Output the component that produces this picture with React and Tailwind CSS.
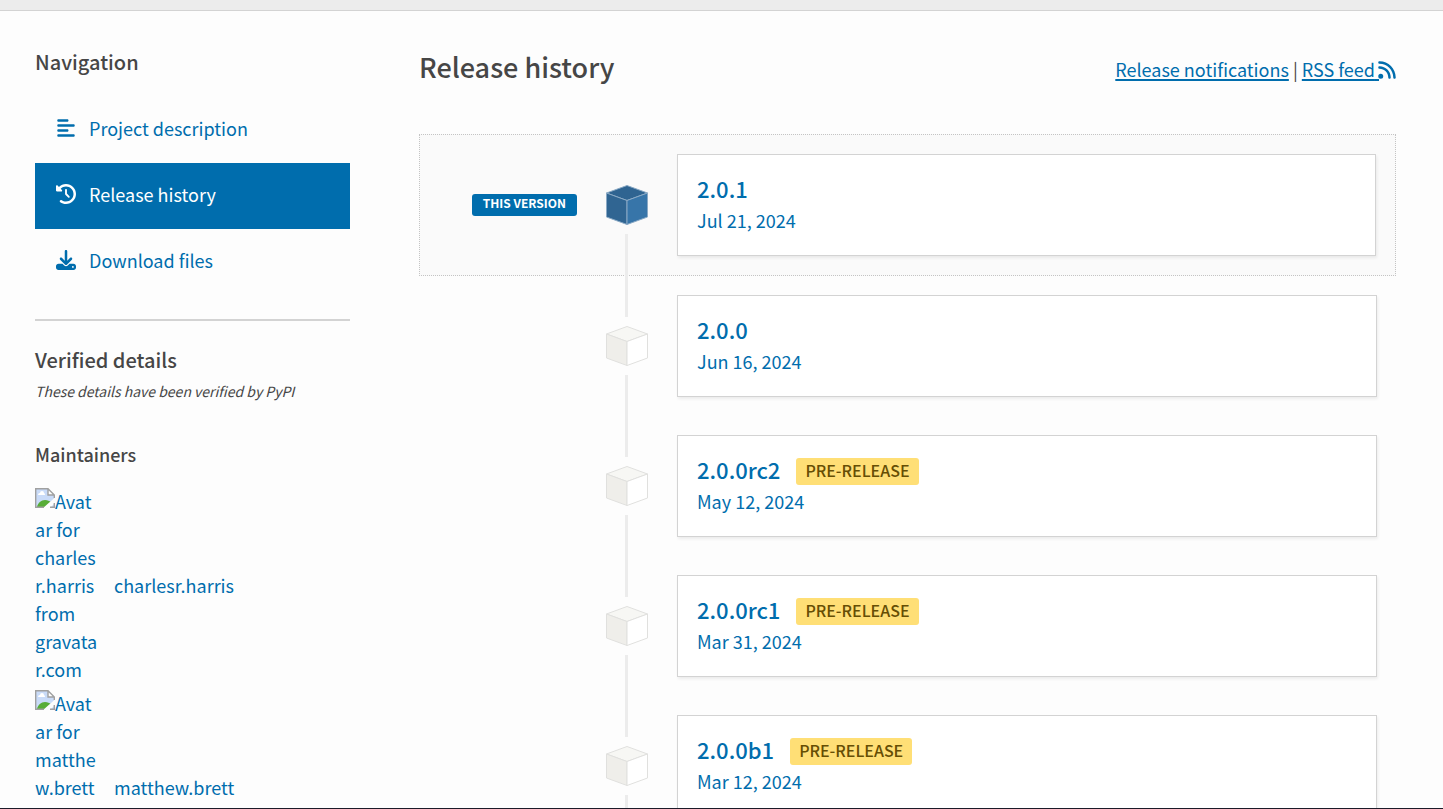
import { FaAlignLeft, FaClockRotateLeft, FaDownload, FaRss } from 'react-icons/fa6';

const navItems = [
  { label: 'Project description', icon: FaAlignLeft },
  { label: 'Release history', icon: FaClockRotateLeft, active: true },
  { label: 'Download files', icon: FaDownload },
];

const maintainers = [
  {
    name: 'charlesr.harris',
    alt: ['Avat', 'ar for', 'charles', 'r.harris', 'from', 'gravata', 'r.com'],
  },
  {
    name: 'matthew.brett',
    alt: ['Avat', 'ar for', 'matthe', 'w.brett', 'from', 'gravata', 'r.com'],
  },
];

const releases = [
  { version: '2.0.1', date: 'Jul 21, 2024', current: true },
  { version: '2.0.0', date: 'Jun 16, 2024' },
  { version: '2.0.0rc2', date: 'May 12, 2024', pre: true },
  { version: '2.0.0rc1', date: 'Mar 31, 2024', pre: true },
  { version: '2.0.0b1', date: 'Mar 12, 2024', pre: true },
];

function BrokenImage() {
  return (
    <svg viewBox="0 0 20 20" className="mt-px h-5 w-5 shrink-0 self-start" aria-hidden="true">
      <path d="M.5.5h12.5L19.5 7v12.5H.5z" fill="#c9dbf8" />
      <path d="M3 7a2 2 0 0 1 2-2 2 2 0 0 1 4 0 2 2 0 0 1 1 2z" fill="#fff" />
      <path d="M2 19c1-4 4-7 8-7 3 0 4 1 6 2v5z" fill="#58ad38" />
      <path d="M8 20 20 9.5V15l-5 5z" fill="#fdfdfd" />
      <path d="M13 .5V7h6.5z" fill="#fff" />
      <path d="M9 19.3H.7V.7H13L19.3 7v3M13 .7V7h6.3M15 19.3h4.3V15" fill="none" stroke="#a0a0a0" strokeWidth="1.4" />
    </svg>
  );
}

function Cube({ blue }) {
  const top = blue ? '#2f6491' : '#f7f7f4';
  const left = blue ? '#306592' : '#efeeea';
  const right = blue ? '#3775a9' : '#ffffff';
  const edge = blue ? '#8aa9c5' : '#e0e0de';
  return (
    <svg viewBox="0 0 42 40" className="h-10 w-[42px]" aria-hidden="true">
      <g stroke={edge} strokeWidth="1" strokeLinejoin="round">
        <path d="M21 .5 41.5 8 21 15.5.5 8z" fill={top} />
        <path d="M.5 8 21 15.5v24L.5 32z" fill={left} />
        <path d="M41.5 8 21 15.5v24L41.5 32z" fill={right} />
      </g>
    </svg>
  );
}

function Sidebar() {
  return (
    <aside className="w-[315px] shrink-0">
      <h2 className="pt-[37px] text-[20px] leading-7 font-medium">Navigation</h2>
      <nav className="mt-[21px] mb-6">
        {navItems.map(({ label, icon: Icon, active }) => (
          <a
            key={label}
            href="#"
            className={
              active
                ? 'flex h-[66px] items-center gap-3 bg-[#006dad] pb-1 pl-5 text-white'
                : 'flex h-[66px] items-center gap-3 pb-1 pl-5 text-[#006dad]'
            }
          >
            <span className="flex w-[22px] justify-center">
              <Icon size={20} />
            </span>
            {label}
          </a>
        ))}
      </nav>
      <div className="border-t-2 border-[#d3d3d3] pt-[25px]">
        <h2 className="text-[20px] leading-7 font-medium">Verified details</h2>
        <p className="mt-[5px] text-[14px] leading-6 italic">These details have been verified by PyPI</p>
        <h3 className="mt-[39px] text-[18px] leading-6 font-medium">Maintainers</h3>
        <ul className="mt-[21px] space-y-1.5">
          {maintainers.map((person) => (
            <li key={person.name}>
              <a href="#" className="flex items-center gap-4 text-[#006dad]">
                <span className="w-[63px] whitespace-nowrap">
                  {person.alt.map((line, i) => (
                    <span key={line} className="flex h-7 items-center">
                      {i === 0 && <BrokenImage />}
                      {line}
                    </span>
                  ))}
                </span>
                {person.name}
              </a>
            </li>
          ))}
        </ul>
      </div>
    </aside>
  );
}

function Release({ release, first }) {
  return (
    <li
      className={
        release.current
          ? 'flex border border-dotted border-[#c4c4c4] bg-[#fafafa] pr-[19px]'
          : 'flex border-l border-transparent pr-[19px]'
      }
    >
      <div className="flex w-[157px] shrink-0 items-center justify-end">
        {release.current && (
          <span className="rounded-[3px] bg-[#006dad] px-[11px] pb-1 text-[12px] leading-[18px] font-bold text-white">
            THIS VERSION
          </span>
        )}
      </div>
      <div
        className={
          release.current
            ? '-my-px flex w-[100px] shrink-0 flex-col items-center'
            : 'flex w-[100px] shrink-0 flex-col items-center'
        }
      >
        <div className={first ? 'flex-1' : 'mr-px w-[3px] flex-1 bg-[#ececec]'} />
        <div className="flex h-[58px] items-center">
          <Cube blue={release.current} />
        </div>
        <div className="mr-px w-[3px] flex-1 bg-[#ececec]" />
      </div>
      <a
        href="#"
        className="my-[19px] flex h-[102px] flex-1 flex-col justify-center border border-[#d3d3d3] bg-white px-[19px] pb-1.5 text-[#006dad] shadow-[1px_2px_3px_rgba(0,0,0,0.07)]"
      >
        <span className="flex items-center gap-4">
          <span className="text-[22px] leading-9 font-medium">{release.version}</span>
          {release.pre && (
            <span className="mb-0.5 self-end rounded-[3px] bg-[#ffdf76] px-[9px] pb-0.5 text-[16px] leading-[25px] font-medium text-[#664e04]">
              PRE-RELEASE
            </span>
          )}
        </span>
        <time className="leading-7">{release.date}</time>
      </a>
    </li>
  );
}

export default function App() {
  return (
    <div className="flex h-screen flex-col overflow-hidden border-b border-[#1c1b29] bg-[#fdfdfd] font-['Noto_Sans_CJK_JP','Noto_Sans',sans-serif] text-[18px] leading-7 text-[#464646]">
      <div className="h-[11px] shrink-0 border-b border-[#d3d3d3] bg-[#ececec]" />
      <div className="flex min-h-0 flex-1 gap-[69px] pr-[47px] pl-[35px]">
        <Sidebar />
        <main className="min-w-0 flex-1">
          <header className="flex items-center justify-between pt-9">
            <h1 className="text-[27px] leading-10 font-medium">Release history</h1>
            <p className="pt-1">
              <a href="#" className="text-[#006dad] underline decoration-2 underline-offset-2">
                Release notifications
              </a>{' '}
              |{' '}
              <a href="#" className="text-[#006dad] underline decoration-2 underline-offset-2">
                RSS feed{' '}
                <FaRss size={20} viewBox="0 0 448 512" className="-ml-px inline-block w-[18px] align-[-3px]" />
              </a>
            </p>
          </header>
          <ol className="mt-[47px]">
            {releases.map((release, i) => (
              <Release key={release.version} release={release} first={i === 0} />
            ))}
          </ol>
        </main>
      </div>
    </div>
  );
}
